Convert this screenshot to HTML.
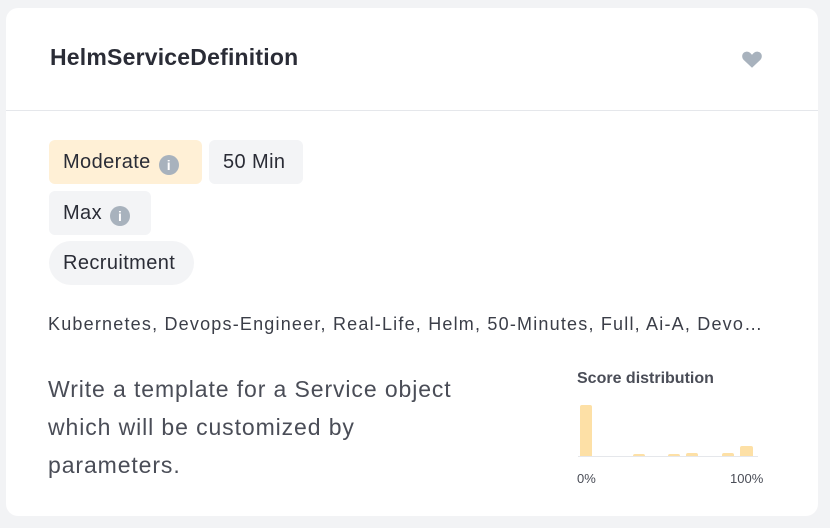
<!DOCTYPE html>
<html><head><style>
*{margin:0;padding:0;box-sizing:border-box}
body{width:830px;height:528px;background:#f2f3f5;font-family:"Liberation Sans",sans-serif;position:relative;overflow:hidden;color:#2a2c36}
.card{position:absolute;left:6px;top:8px;width:812px;height:508px;background:#fff;border-radius:12px}
.hd{position:absolute;left:0;top:0;width:100%;height:103px;border-bottom:1px solid #e5e7eb}
.title{position:absolute;left:44px;top:36px;font-size:23px;font-weight:bold;color:#2a2c36;letter-spacing:0.2px}
.chip{position:absolute;height:44px;border-radius:6px;background:#f3f4f6;font-size:20px;line-height:44px;padding-left:14px;color:#2a2c36;letter-spacing:0.4px}
.info{display:inline-block;width:20px;height:20px;border-radius:50%;background:#a8b2bd;color:#fff;font-size:14px;font-weight:bold;text-align:center;line-height:20px;vertical-align:-2px;margin-left:8px;letter-spacing:0}
.tags{position:absolute;left:42px;top:306px;font-size:18px;color:#3b3e48;letter-spacing:1.2px;white-space:nowrap}
.desc{position:absolute;left:42px;top:362px;font-size:23px;line-height:38px;color:#4a4d57;width:432px;letter-spacing:0.9px}
.sd{position:absolute;left:571px;top:362px;font-size:16px;font-weight:bold;color:#4a4d57}
.bar{position:absolute;background:#fde0a6;border-radius:2px 2px 0 0}
.lbl{position:absolute;top:463px;font-size:13px;color:#4a4d57}
</style></head><body>
<div class="card">
<div class="hd"><div class="title">HelmServiceDefinition</div>
<svg style="position:absolute;left:735px;top:42px" width="22" height="19" viewBox="0 0 24 20"><path d="M12 19 L3 10.5 C0 7.5 1 2 5.5 1.5 C8.5 1 10.5 3 12 5 C13.5 3 15.5 1 18.5 1.5 C23 2 24 7.5 21 10.5 Z" fill="#a8b2bd"/></svg>
</div>
<div class="chip" style="left:43px;top:132px;width:153px;background:#fff0d6">Moderate<span class="info">i</span></div>
<div class="chip" style="left:203px;top:132px;width:94px">50 Min</div>
<div class="chip" style="left:43px;top:183px;width:102px">Max<span class="info">i</span></div>
<div class="chip" style="left:43px;top:233px;width:145px;border-radius:22px">Recruitment</div>
<div class="tags">Kubernetes, Devops-Engineer, Real-Life, Helm, 50-Minutes, Full, Ai-A, Devo…</div>
<div class="desc">Write a template for a Service object which will be customized by parameters.</div>
<div class="sd">Score distribution</div>
<div style="position:absolute;left:572px;top:448px;width:180px;height:1px;background:#e5e7eb"></div>
<div class="bar" style="left:574px;top:397px;width:12px;height:51px"></div>
<div class="bar" style="left:627px;top:446px;width:12px;height:2px"></div>
<div class="bar" style="left:662px;top:446px;width:12px;height:2px"></div>
<div class="bar" style="left:680px;top:445px;width:12px;height:3px"></div>
<div class="bar" style="left:716px;top:445px;width:12px;height:3px"></div>
<div class="bar" style="left:734px;top:438px;width:13px;height:10px"></div>
<div class="lbl" style="left:571px">0%</div>
<div class="lbl" style="left:724px">100%</div>
</div>
</body></html>
